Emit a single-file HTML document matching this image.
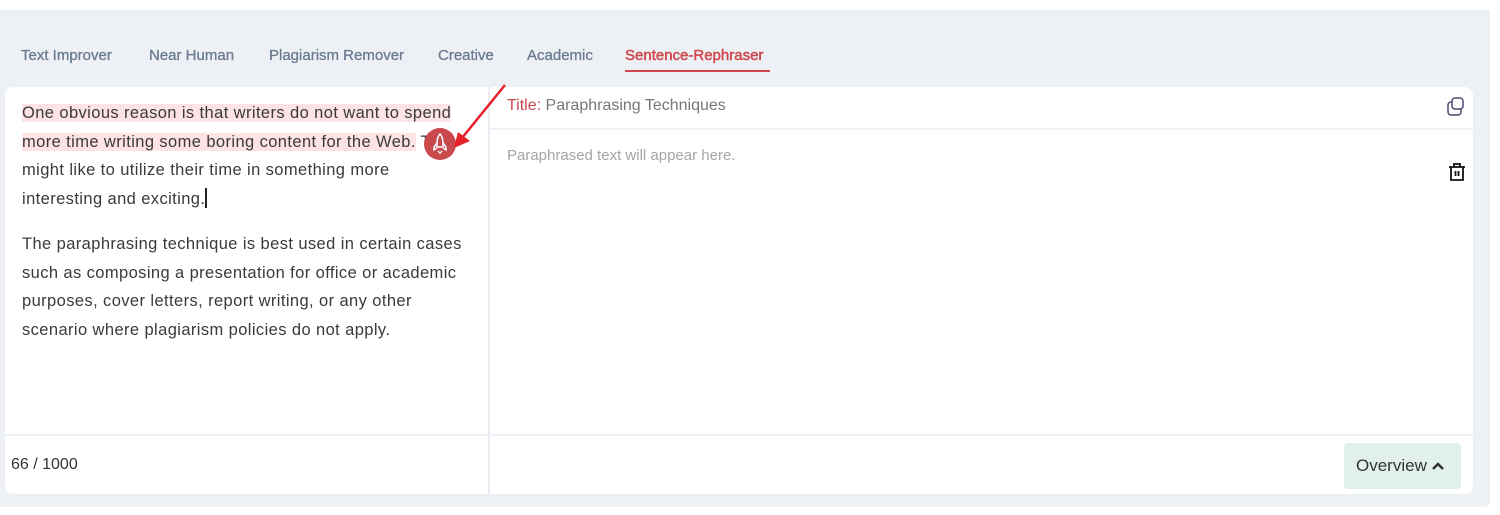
<!DOCTYPE html>
<html><head><meta charset="utf-8"><style>
*{margin:0;padding:0;box-sizing:border-box}
body{width:1500px;height:515px;background:#fff;font-family:"Liberation Sans",sans-serif;position:relative;overflow:hidden}
.bg{position:absolute;left:0;top:10px;width:1490px;height:497px;background:#edf1f5;border-radius:0 0 6px 0}
.tab{position:absolute;top:47px;font-size:15px;color:#6b7a90;white-space:nowrap;-webkit-text-stroke:0.3px #6b7a90}
.card{position:absolute;left:5px;top:87px;width:1468px;height:407px;background:#fff;border-radius:8px}
.left{position:absolute;left:22px;top:99px;font-size:16.5px;letter-spacing:0.4px;line-height:28.5px;color:#3a3a3a;white-space:nowrap}
.hl{background:#fde3e3}
</style></head><body>
<div class="bg"></div>
<div class="tab" style="left:21px">Text Improver</div>
<div class="tab" style="left:149px">Near Human</div>
<div class="tab" style="left:269px">Plagiarism Remover</div>
<div class="tab" style="left:438px">Creative</div>
<div class="tab" style="left:527px">Academic</div>
<div class="tab" style="left:625px;color:#d0484d;-webkit-text-stroke:0.5px #d0484d">Sentence-Rephraser</div>
<div style="position:absolute;left:625px;top:70px;width:145px;height:2px;background:#d0484d"></div>
<div class="card"></div>
<div style="position:absolute;left:488px;top:87px;width:2px;height:407px;background:#e8edf2"></div>
<div style="position:absolute;left:490px;top:128px;width:983px;height:2px;background:#eef2f6"></div>
<div style="position:absolute;left:5px;top:434px;width:1468px;height:2px;background:#eef2f6"></div>
<div class="left"><span class="hl">One obvious reason is that writers do not want to spend</span><br><span class="hl">more time writing some boring content for the Web.</span> They<br>might like to utilize their time in something more<br>interesting and exciting.<span style="display:inline-block;width:2px;height:20px;background:#222;vertical-align:-4px"></span><div style="height:17px"></div>The paraphrasing technique is best used in certain cases<br>such as composing a presentation for office or academic<br>purposes, cover letters, report writing, or any other<br>scenario where plagiarism policies do not apply.</div>
<div style="position:absolute;left:424px;top:128px;width:32px;height:32px;border-radius:50%;background:#c9484c"></div>
<svg style="position:absolute;left:424px;top:128px" width="32" height="32" viewBox="0 0 32 32" fill="none" stroke="#fff" stroke-width="1.5"><path d="M16 6c-3 3-3 8-3 13h6c0-5 0-10-3-13z"/><path d="M13 15l-3 4v3l3-2M19 15l3 4v3l-3-2"/><path d="M14 23l2 2 2-2" fill="#333"/></svg>
<svg style="position:absolute;left:450px;top:82px" width="60" height="72"><line x1="55" y1="3" x2="12" y2="56" stroke="#e8202a" stroke-width="2.5"/><path d="M4 66l4-16 12 9z" fill="#e8202a"/></svg>
<div style="position:absolute;left:507px;top:97px;font-size:16px;color:#777"><span style="color:#c9484c">Title:</span> Paraphrasing Techniques</div>
<div style="position:absolute;left:507px;top:147px;font-size:15px;color:#a5a5a5">Paraphrased text will appear here.</div>
<svg style="position:absolute;left:1446px;top:96px" width="22" height="22" viewBox="0 0 22 22" fill="none" stroke="#4a4a70" stroke-width="1.5"><rect x="6" y="2" width="11" height="11" rx="3"/><path d="M6 6h-1a3 3 0 0 0-3 3v7a3 3 0 0 0 3 3h7a3 3 0 0 0 3-3v-3"/></svg>
<svg style="position:absolute;left:1447px;top:162px" width="20" height="20" viewBox="0 0 20 20" fill="none" stroke="#111" stroke-width="1.8"><path d="M2 5h16M7 5V2h6v3M4 5v13h12V5M8.5 9v5M11.5 9v5"/></svg>
<div style="position:absolute;left:11px;top:456px;font-size:16px;color:#333">66 / 1000</div>
<div style="position:absolute;left:1344px;top:443px;width:117px;height:46px;background:#e1f1ea;border-radius:4px;font-size:17px;color:#333;line-height:46px;padding-left:12px">Overview<svg width="14" height="10" viewBox="0 0 14 10" style="margin-left:4px"><path d="M2 8l5-5 5 5" fill="none" stroke="#333" stroke-width="2.5"/></svg></div>
</body></html>
